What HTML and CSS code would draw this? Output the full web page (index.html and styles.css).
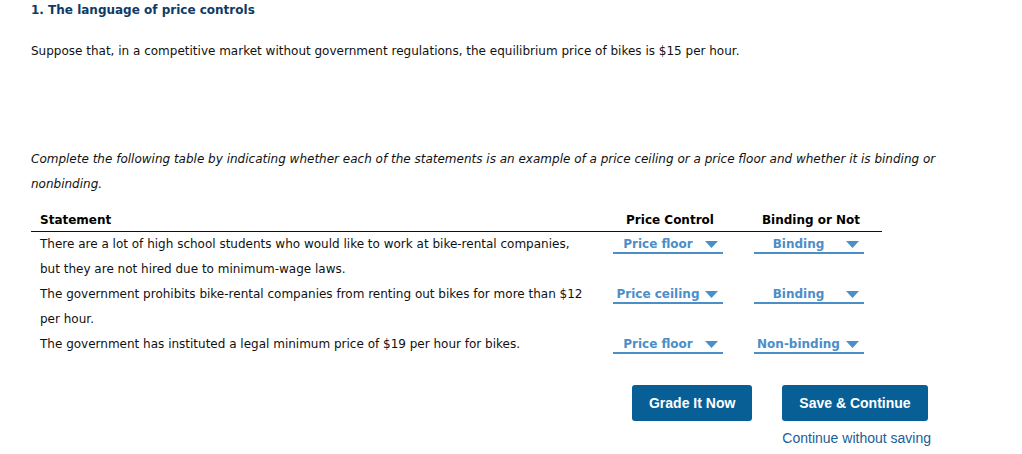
FILE: index.html
```html
<!DOCTYPE html>
<html>
<head>
<meta charset="utf-8">
<link rel="stylesheet" href="styles.css">
</head>
<body>
<div class="page">
  <h1 class="title">1. The language of price controls</h1>
  <p class="intro">Suppose that, in a competitive market without government regulations, the equilibrium price of bikes is $15 per hour.</p>
  <p class="instr">Complete the following table by indicating whether each of the statements is an example of a price ceiling or a price floor and whether it is binding or nonbinding.</p>
  <table class="grid">
    <thead>
      <tr>
        <th class="c-stmt">Statement</th>
        <th class="c-ctrl">Price Control</th>
        <th class="c-bind">Binding or Not</th>
      </tr>
    </thead>
    <tbody>
      <tr>
        <td class="c-stmt">There are a lot of high school students who would like to work at bike-rental companies, but they are not hired due to minimum-wage laws.</td>
        <td class="c-ctrl"><span class="sel"><span class="val">Price floor</span><svg class="arr" width="13" height="7" viewBox="0 0 13 7"><path d="M0 0H13L6.5 7Z"/></svg></span></td>
        <td class="c-bind"><span class="sel"><span class="val">Binding</span><svg class="arr" width="13" height="7" viewBox="0 0 13 7"><path d="M0 0H13L6.5 7Z"/></svg></span></td>
      </tr>
      <tr>
        <td class="c-stmt">The government prohibits bike-rental companies from renting out bikes for more than $12 per hour.</td>
        <td class="c-ctrl"><span class="sel"><span class="val">Price ceiling</span><svg class="arr" width="13" height="7" viewBox="0 0 13 7"><path d="M0 0H13L6.5 7Z"/></svg></span></td>
        <td class="c-bind"><span class="sel"><span class="val">Binding</span><svg class="arr" width="13" height="7" viewBox="0 0 13 7"><path d="M0 0H13L6.5 7Z"/></svg></span></td>
      </tr>
      <tr>
        <td class="c-stmt">The government has instituted a legal minimum price of $19 per hour for bikes.</td>
        <td class="c-ctrl"><span class="sel"><span class="val">Price floor</span><svg class="arr" width="13" height="7" viewBox="0 0 13 7"><path d="M0 0H13L6.5 7Z"/></svg></span></td>
        <td class="c-bind"><span class="sel"><span class="val">Non-binding</span><svg class="arr" width="13" height="7" viewBox="0 0 13 7"><path d="M0 0H13L6.5 7Z"/></svg></span></td>
      </tr>
    </tbody>
  </table>
  <div class="actions">
    <div class="btn-row">
      <button class="btn">Grade It Now</button>
      <div class="save-col">
        <button class="btn">Save &amp; Continue</button>
        <a class="link" href="#">Continue without saving</a>
      </div>
    </div>
  </div>
</div>
</body>
</html>
```

FILE: styles.css
```css
html, body {
  margin: 0;
  padding: 0;
  background: #ffffff;
}
body {
  font-family: "DejaVu Sans", Verdana, sans-serif;
  font-size: 12px;
  color: #111111;
}
.page {
  padding: 2px 0 0 31px;
  width: 904px;
}
.title {
  margin: 0;
  font-size: 12px;
  line-height: 16px;
  font-weight: bold;
  color: #0d3b66;
}
.intro {
  margin: 23px 0 0 0;
  line-height: 20px;
}
.instr {
  margin: 86px 0 0 0;
  line-height: 25px;
  font-style: italic;
  width: 930px;
}
.grid {
  border-collapse: collapse;
  width: 851px;
  margin-top: 13px;
  table-layout: fixed;
}
.grid th {
  font-weight: bold;
  line-height: 18px;
  padding: 1px 0 2px 0;
  border-bottom: 1px solid #111111;
  color: #000000;
}
.grid td {
  line-height: 25px;
  height: 50px;
  padding: 0;
  vertical-align: top;
  box-sizing: border-box;
}
.grid th.c-stmt,
.grid td.c-stmt {
  text-align: left;
  width: 550px;
  padding-left: 9px;
  padding-right: 10px;
}
.c-ctrl {
  width: 140px;
  text-align: center;
}
.c-bind {
  text-align: center;
}
.sel {
  display: inline-flex;
  align-items: flex-end;
  width: 110px;
  height: 22px;
  vertical-align: top;
  box-sizing: border-box;
  border-bottom: 2px solid #4b8ec8;
  color: #4b8ec8;
  font-weight: bold;
}
.c-ctrl .sel { margin-left: -4px; }
.c-bind .sel { margin-left: -5px; }
.val {
  flex: 1;
  text-align: center;
  line-height: 16px;
  white-space: nowrap;
}
.arr {
  fill: #4b8ec8;
  flex: none;
  margin: 0 5px 4px 2px;
}
.actions {
  margin-top: 3px;
  display: flex;
  justify-content: flex-end;
  padding-right: 4px;
}
.btn-row {
  display: flex;
  gap: 30px;
  align-items: flex-start;
}
.save-col {
  display: flex;
  flex-direction: column;
  align-items: flex-start;
}
.btn {
  background: #075f96;
  color: #ffffff;
  border: none;
  border-radius: 3px;
  height: 36px;
  padding: 0 17px;
  font-family: "Liberation Sans", Arial, sans-serif;
  font-size: 14px;
  font-weight: bold;
}
.link {
  margin-top: 9px;
  font-family: "Liberation Sans", Arial, sans-serif;
  font-size: 14px;
  line-height: 16px;
  color: #1b5e96;
  text-decoration: none;
}
```
